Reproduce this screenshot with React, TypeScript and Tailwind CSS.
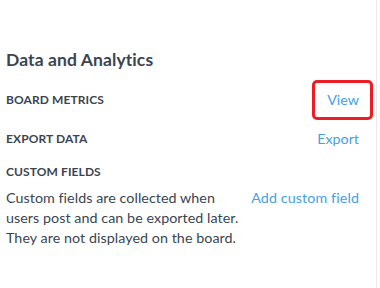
import React from "react";

export default function App() {
  const font = { fontFamily: "Lato, 'Open Sans', sans-serif" };
  return (
    <div className="w-[380px] h-[288px] bg-white flex" style={font}>
      <div className="w-[377px] h-full border-r border-[#e9e9e9] pl-[6px] pr-[17px] pt-[48px] text-[#3b4550]">
        <h2 className="text-[17.5px] leading-[24px] font-bold tracking-[0.1px]">Data and Analytics</h2>
        <div className="mt-[18px] flex items-center justify-between h-[20px]">
          <span className="text-[12px] font-bold tracking-[0.1px]">BOARD METRICS</span>
          <span className="relative text-[14.3px] text-[#45a2e2]">
            View
            <span className="absolute -left-[15px] -right-[14px] -top-[9px] -bottom-[9px] border-[3px] border-[#ee1c24] rounded-[5px]" />
          </span>
        </div>
        <div className="mt-[19px] flex items-center justify-between h-[20px]">
          <span className="text-[12px] font-bold tracking-[0.1px]">EXPORT DATA</span>
          <span className="text-[14.3px] text-[#45a2e2]">Export</span>
        </div>
        <div className="mt-[13px] h-[20px] flex items-center">
          <span className="text-[12px] font-bold tracking-[0.1px]">CUSTOM FIELDS</span>
        </div>
        <div className="mt-[6px] flex justify-between">
          <p className="whitespace-nowrap text-[14.3px] leading-[20px] tracking-[0.05px]">
            Custom fields are collected when
            <br />
            users post and can be exported later.
            <br />
            They are not displayed on the board.
          </p>
          <span className="text-[14.3px] leading-[20px] text-[#45a2e2] tracking-[0.1px]">Add custom field</span>
        </div>
      </div>
    </div>
  );
}
